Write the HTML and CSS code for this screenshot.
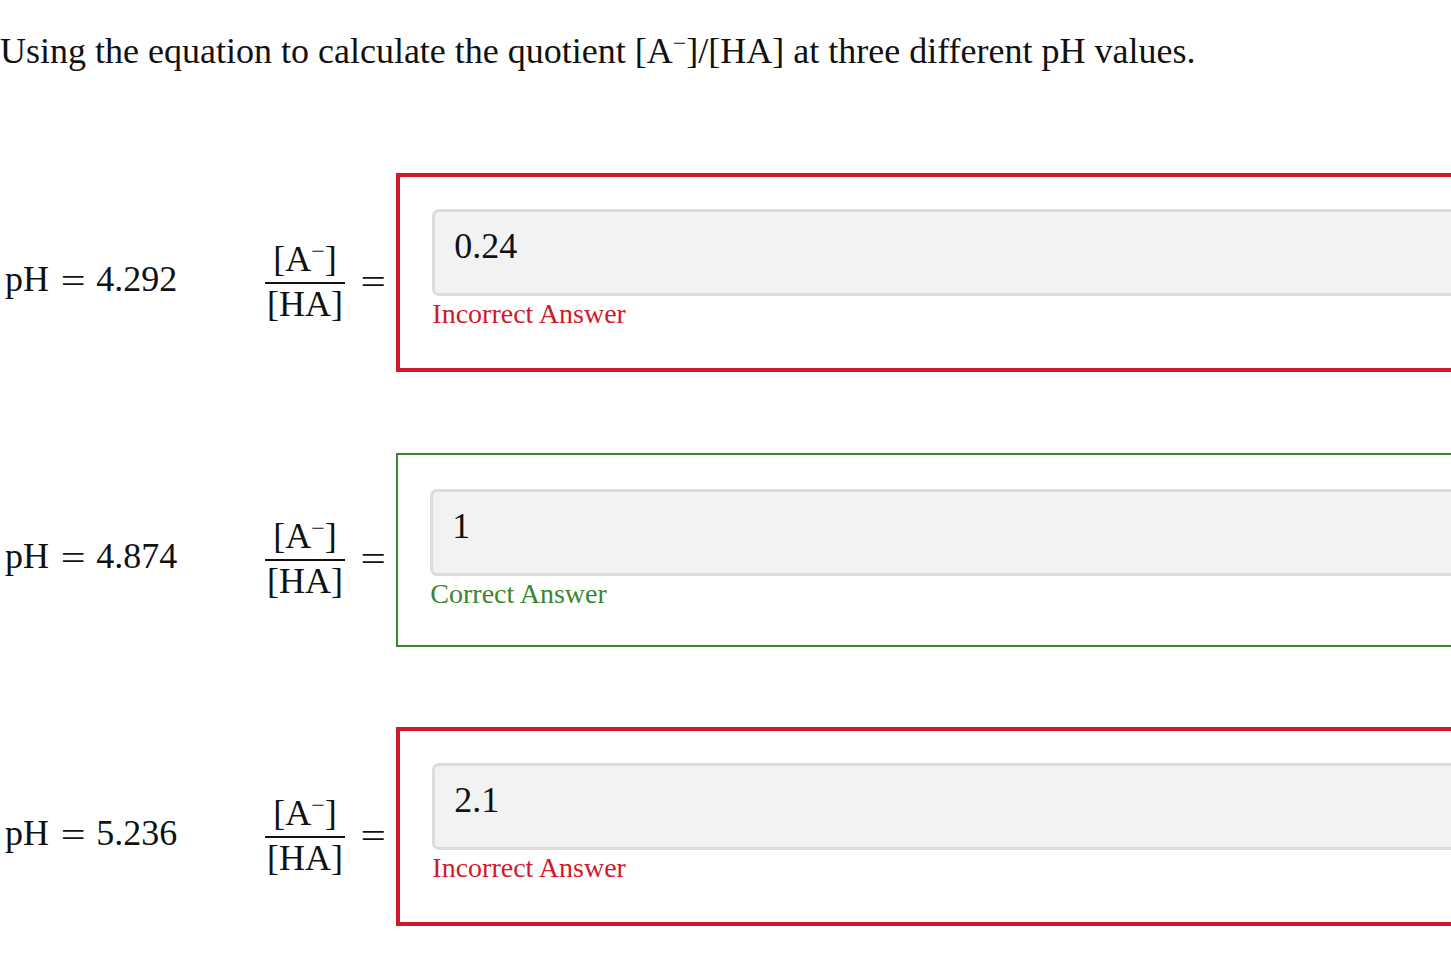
FILE: index.html
```html
<!DOCTYPE html>
<html lang="en">
<head>
<meta charset="utf-8">
<title>Henderson–Hasselbalch quotient</title>
<link rel="stylesheet" href="styles.css">
</head>
<body>
<p class="intro">Using the equation to calculate the quotient [A<sup class="minus">−</sup>]/[HA] at three different pH values.</p>

<div class="rows">
  <div class="row">
    <div class="lhs">pH<span class="rel">=</span>4.292</div>
    <div class="frac"><span class="num">[A<sup class="sm">−</sup>]</span><span class="den">[HA]</span></div>
    <div class="eq"><span class="eqsign">=</span></div>
    <div class="box box-wrong">
      <div class="field">0.24</div>
      <div class="status">Incorrect Answer</div>
    </div>
  </div>

  <div class="row">
    <div class="lhs">pH<span class="rel">=</span>4.874</div>
    <div class="frac"><span class="num">[A<sup class="sm">−</sup>]</span><span class="den">[HA]</span></div>
    <div class="eq"><span class="eqsign">=</span></div>
    <div class="box box-right">
      <div class="field">1</div>
      <div class="status">Correct Answer</div>
    </div>
  </div>

  <div class="row">
    <div class="lhs">pH<span class="rel">=</span>5.236</div>
    <div class="frac"><span class="num">[A<sup class="sm">−</sup>]</span><span class="den">[HA]</span></div>
    <div class="eq"><span class="eqsign">=</span></div>
    <div class="box box-wrong">
      <div class="field">2.1</div>
      <div class="status">Incorrect Answer</div>
    </div>
  </div>
</div>
</body>
</html>
```

FILE: styles.css
```css
html, body {
  margin: 0;
  padding: 0;
  background: #fff;
  overflow: hidden;
}

body {
  font-family: "Liberation Serif", "Times New Roman", serif;
  color: #111;
  width: 1451px;
  height: 954px;
}

.intro {
  font-size: 36px;
  line-height: 44px;
  margin: 29px 0 0 0;
  white-space: nowrap;
}

.minus {
  font-size: 24px;
  vertical-align: 12px;
  line-height: 0;
}

.rows {
  display: flex;
  flex-direction: column;
  gap: 78px;
  margin-top: 100px;
}

.row {
  display: flex;
  align-items: center;
  height: 199px;
}

.lhs {
  flex: 0 0 auto;
  box-sizing: border-box;
  width: 265px;
  padding-left: 5px;
  font-size: 36px;
  line-height: 36px;
  white-space: nowrap;
  margin-top: 14px;
}

.rel {
  display: inline-block;
  margin: 0 13.5px 0 13.5px;
  transform: scaleX(1.22);
  vertical-align: -2px;
}

.frac {
  flex: 0 0 auto;
  width: 80px;
  display: flex;
  flex-direction: column;
  align-items: stretch;
  text-align: center;
  font-size: 36px;
  line-height: 36px;
  margin-top: 18px;
}

.num {
  padding-bottom: 5px;
  border-bottom: 2px solid #111;
  white-space: nowrap;
}

.sm {
  font-size: 24px;
  vertical-align: 12px;
  line-height: 0;
}

.den {
  padding-top: 2px;
  white-space: nowrap;
}

.eq {
  flex: 0 0 auto;
  font-size: 36px;
  line-height: 36px;
  margin: 18px 13px 0 18px;
}

.eqsign {
  display: inline-block;
  transform: scaleX(1.25);
}

.box {
  flex: 1 1 auto;
  min-width: 0;
  background: #fff;
  border-right: 0;
}

.box-wrong {
  border: 4px solid #d0192b;
  border-right: 0;
  padding: 32px 0 32px 32px;
}

.box-right {
  border: 2px solid #3a862f;
  border-right: 0;
  padding: 34px 0 29px 32px;
}

.field {
  box-sizing: border-box;
  height: 87px;
  border: 3px solid #dcdcdc;
  border-right: 0;
  border-radius: 7px 0 0 7px;
  background: #f2f2f2;
  font-size: 36px;
  line-height: 40px;
  padding: 14px 0 0 19px;
  color: #111;
}

.status {
  font-size: 28px;
  line-height: 32px;
  margin-top: 2px;
  margin-bottom: 6px;
  white-space: nowrap;
}

.box-wrong .status {
  color: #d0192b;
}

.box-right .status {
  color: #3a862f;
}
```
